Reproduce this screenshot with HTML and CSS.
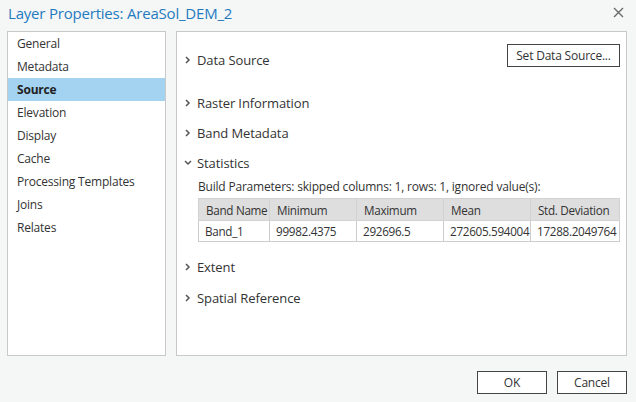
FILE: index.html
```html
<!DOCTYPE html>
<html lang="en">
<head>
    <meta charset="UTF-8">
    <title>Layer Properties: AreaSol_DEM_2</title>
    <link rel="stylesheet" href="styles.css">
</head>
<body>

    <div class="titlebar">
        <span class="title">Layer Properties: AreaSol_DEM_2</span>
        <svg class="close" width="11" height="11" viewBox="0 0 11 11">
            <path d="M1 1 L10 10 M10 1 L1 10" stroke="#6a6a6a" stroke-width="1.4" fill="none"/>
        </svg>
    </div>

    <div class="main">
        <ul class="nav">
            <li>General</li>
            <li>Metadata</li>
            <li class="active">Source</li>
            <li>Elevation</li>
            <li>Display</li>
            <li>Cache</li>
            <li>Processing Templates</li>
            <li>Joins</li>
            <li>Relates</li>
        </ul>

        <div class="panel">
            <div class="top-row">
                <div class="section first">
                    <svg class="chev" width="12" height="8" viewBox="0 0 12 8"><path d="M2 1 L5 4 L2 7" stroke="#555" stroke-width="1.5" fill="none"/></svg>
                    Data Source
                </div>
                <div class="btn set-source">Set Data Source...</div>
            </div>
            <div class="section raster">
                <svg class="chev" width="12" height="8" viewBox="0 0 12 8"><path d="M2 1 L5 4 L2 7" stroke="#555" stroke-width="1.5" fill="none"/></svg>
                Raster Information
            </div>
            <div class="section">
                <svg class="chev" width="12" height="8" viewBox="0 0 12 8"><path d="M2 1 L5 4 L2 7" stroke="#555" stroke-width="1.5" fill="none"/></svg>
                Band Metadata
            </div>
            <div class="section">
                <svg class="chev" width="12" height="8" viewBox="0 0 12 8"><path d="M1 2 L4 5 L7 2" stroke="#555" stroke-width="1.5" fill="none"/></svg>
                Statistics
            </div>

            <div class="stats">
                <div class="params">Build Parameters: skipped columns: 1, rows: 1, ignored value(s):</div>
                <table>
                    <tr>
                        <th class="c1">Band Name</th>
                        <th class="c2">Minimum</th>
                        <th class="c3">Maximum</th>
                        <th class="c4">Mean</th>
                        <th class="c5">Std. Deviation</th>
                    </tr>
                    <tr>
                        <td>Band_1</td>
                        <td>99982.4375</td>
                        <td>292696.5</td>
                        <td>272605.594004</td>
                        <td>17288.2049764</td>
                    </tr>
                </table>
            </div>

            <div class="section extent">
                <svg class="chev" width="12" height="8" viewBox="0 0 12 8"><path d="M2 1 L5 4 L2 7" stroke="#555" stroke-width="1.5" fill="none"/></svg>
                Extent
            </div>
            <div class="section spatial">
                <svg class="chev" width="12" height="8" viewBox="0 0 12 8"><path d="M2 1 L5 4 L2 7" stroke="#555" stroke-width="1.5" fill="none"/></svg>
                Spatial Reference
            </div>
        </div>
    </div>

    <div class="footer">
        <div class="btn">OK</div>
        <div class="btn">Cancel</div>
    </div>

</body>
</html>
```

FILE: styles.css
```css
body {
    margin: 0;
    width: 636px;
    height: 402px;
    background-color: #f5f6f6;
    font-family: 'Open Sans', 'Noto Sans', sans-serif;
    color: #333;
    overflow: hidden;
}

.titlebar {
    height: 31px;
    display: flex;
    align-items: flex-start;
    justify-content: space-between;
    padding: 0 12px 0 8px;
}

.title {
    font-size: 15px;
    line-height: 26px;
    color: #1f7bc0;
    letter-spacing: -0.2px;
}

.close {
    margin-top: 7px;
}

.main {
    display: flex;
    gap: 10px;
    padding: 0 9px 0 7px;
    height: 325px;
}

.nav {
    list-style: none;
    margin: 0;
    padding: 0;
    width: 158px;
    background: white;
    border: 1px solid #c9c9c9;
    font-size: 12px;
}

.nav li {
    height: 23px;
    line-height: 23px;
    padding-left: 9px;
    letter-spacing: -0.2px;
}

.nav li.active {
    background-color: #a4d3f2;
    font-weight: bold;
    color: #222;
}

.panel {
    flex: 1;
    background: white;
    border: 1px solid #c9c9c9;
    padding: 12px 6px 0 7px;
}

.top-row {
    display: flex;
    justify-content: space-between;
    align-items: flex-start;
}

.section {
    font-size: 13px;
    line-height: 20px;
    height: 20px;
    margin-top: 10px;
    display: flex;
    align-items: center;
    letter-spacing: -0.1px;
}

.section.first {
    margin-top: 6px;
}

.section.raster {
    margin-top: 23px;
}

.chev {
    flex: none;
    margin-right: 1px;
}

.btn {
    box-sizing: border-box;
    font-size: 12px;
    line-height: 21px;
    text-align: center;
    color: #333;
    background: white;
    border: 1px solid #444;
    width: 70px;
    height: 23px;
    letter-spacing: -0.2px;
}

.set-source {
    width: 113px;
}

.stats {
    padding-left: 14px;
    font-size: 12px;
}

.params {
    line-height: 16px;
    margin-top: 6px;
    letter-spacing: -0.2px;
}

table {
    border-collapse: collapse;
    table-layout: fixed;
    margin-top: 3px;
    width: 421px;
}

th, td {
    box-sizing: border-box;
    border: 1px solid #cdcdcd;
    height: 21px;
    padding: 0 0 0 7px;
    text-align: left;
    font-weight: normal;
    font-size: 11.7px;
    letter-spacing: -0.3px;
    white-space: nowrap;
    overflow: hidden;
}

th {
    background-color: #dedede;
    border-color: #d2d2d2;
    height: 22px;
}

td {
    padding-left: 6px;
}

.c1 { width: 71px; }
.c2 { width: 87px; }
.c3 { width: 87px; }
.c4 { width: 87px; }
.c5 { width: 89px; }

.extent {
    margin-top: 15px;
}

.spatial {
    margin-top: 11px;
}

.footer {
    display: flex;
    justify-content: flex-end;
    gap: 10px;
    padding: 15px 9px 0 0;
}
```
